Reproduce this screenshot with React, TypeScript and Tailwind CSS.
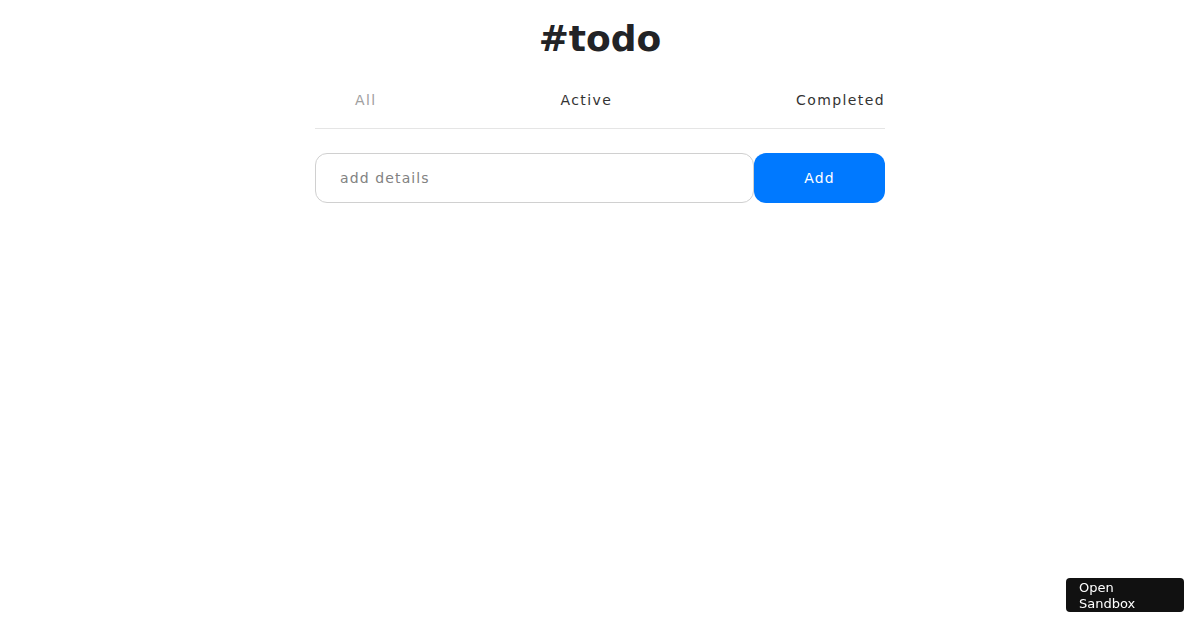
export default function App() {
  return (
    <div className="min-h-[630px] bg-white font-['DejaVu_Sans',sans-serif]">
      <div className="mx-auto w-[570px]">
        <h1 className="pt-[13px] text-center text-[36px] font-bold leading-[52px] text-[#222326]">
          #todo
        </h1>

        <div className="mt-[25px] flex justify-between border-b border-[#e5e5e5] pb-[18px] text-[14px] leading-[20px] tracking-[0.1em]">
          <button className="pl-10 text-[#a0a0a0]">All</button>
          <button className="text-[#333333]">Active</button>
          <button className="text-[#333333]">Completed</button>
        </div>

        <div className="mt-[24px] flex">
          <input
            className="h-[50px] flex-1 rounded-xl border border-[#d0d0d0] px-6 text-[14px] tracking-[0.08em] text-[#333] outline-none placeholder:text-[#828282]"
            placeholder="add details"
          />
          <button className="h-[50px] w-[131px] rounded-xl bg-[#0079ff] text-[14px] tracking-[0.08em] text-white">
            Add
          </button>
        </div>
      </div>

      <div className="fixed right-[16px] bottom-[18px] w-[118px] rounded bg-[#111111] px-[13px] pt-[2px] text-[13px] leading-[16px] text-white">
        Open
        <br />
        Sandbox
      </div>
    </div>
  );
}
